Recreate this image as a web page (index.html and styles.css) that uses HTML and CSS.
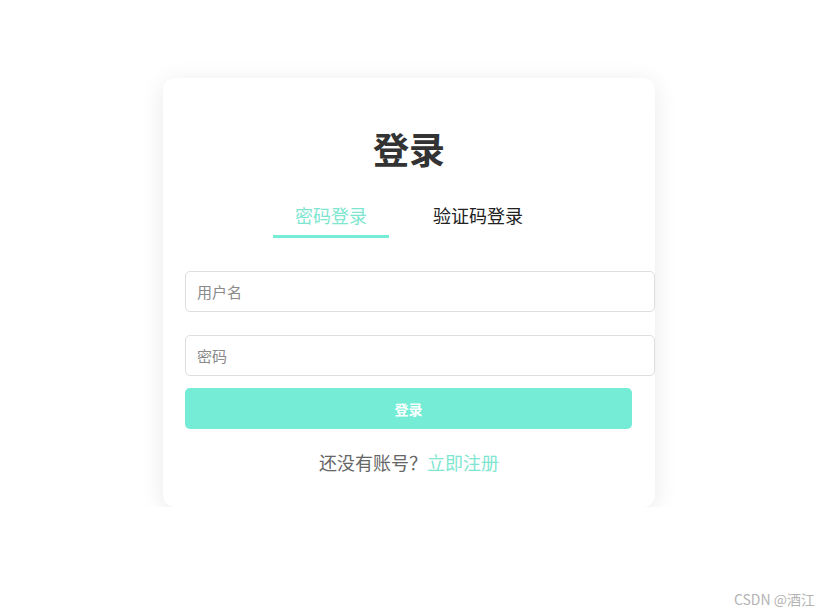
FILE: index.html
```html
<!DOCTYPE html>
<html lang="zh">
<head>
<meta charset="utf-8">
<title>登录</title>
<link rel="stylesheet" href="styles.css">
</head>
<body>
<div class="page">
  <div class="card">
    <h1 class="title">登录</h1>
    <div class="tabs">
      <div class="tab active">密码登录</div>
      <div class="tab">验证码登录</div>
    </div>
    <form class="form">
      <input class="field" type="text" placeholder="用户名">
      <input class="field field-pass" type="password" placeholder="密码">
      <button class="submit" type="button">登录</button>
    </form>
    <p class="footer">还没有账号？<a class="link" href="#">立即注册</a></p>
  </div>
</div>
<div class="watermark">CSDN @酒江</div>
</body>
</html>
```

FILE: styles.css
```css
* { box-sizing: border-box; }
html, body {
  margin: 0;
  padding: 0;
  background: #ffffff;
  font-family: "Noto Sans CJK SC", "Noto Sans", "Liberation Sans", sans-serif;
}
.page {
  padding: 78px 0 0 163px;
}
.card {
  width: 492px;
  padding: 45px 22px 32px 22px;
  background: #fff;
  border-radius: 12px;
  box-shadow: 0 4px 24px rgba(0, 0, 0, 0.09);
}
.title {
  margin: 0;
  font-size: 36px;
  line-height: 50px;
  font-weight: 700;
  color: #333333;
  text-align: center;
}
.tabs {
  display: flex;
  justify-content: center;
  gap: 22px;
  margin-top: 29px;
}
.tab {
  padding: 0 22px 7px;
  font-size: 18px;
  line-height: 26px;
  color: #222;
  border-bottom: 3px solid transparent;
}
.tab.active {
  color: #7ee6d0;
  border-bottom-color: #74ecd6;
}
.form {
  display: flex;
  flex-direction: column;
  margin-top: 33px;
}
.field {
  width: 470px;
  height: 41px;
  padding: 0 11px;
  border: 1px solid #dedede;
  border-radius: 5px;
  font-family: inherit;
  font-size: 15px;
  color: #333;
  outline: none;
}
.field::placeholder { color: #8a8a8a; }
.field-pass { margin-top: 23px; }
.submit {
  width: 447px;
  height: 41px;
  margin-top: 12px;
  border: none;
  border-radius: 5px;
  background: #74ecd6;
  color: #fff;
  font-family: inherit;
  font-size: 14px;
  font-weight: 700;
}
.footer {
  margin: 20px 0 0;
  font-size: 18px;
  line-height: 26px;
  color: #666;
  text-align: center;
}
.link {
  color: #7ee6d0;
  text-decoration: none;
}
.watermark {
  position: absolute;
  right: 14px;
  bottom: 6px;
  font-size: 14px;
  color: #b4b4b4;
}
```
